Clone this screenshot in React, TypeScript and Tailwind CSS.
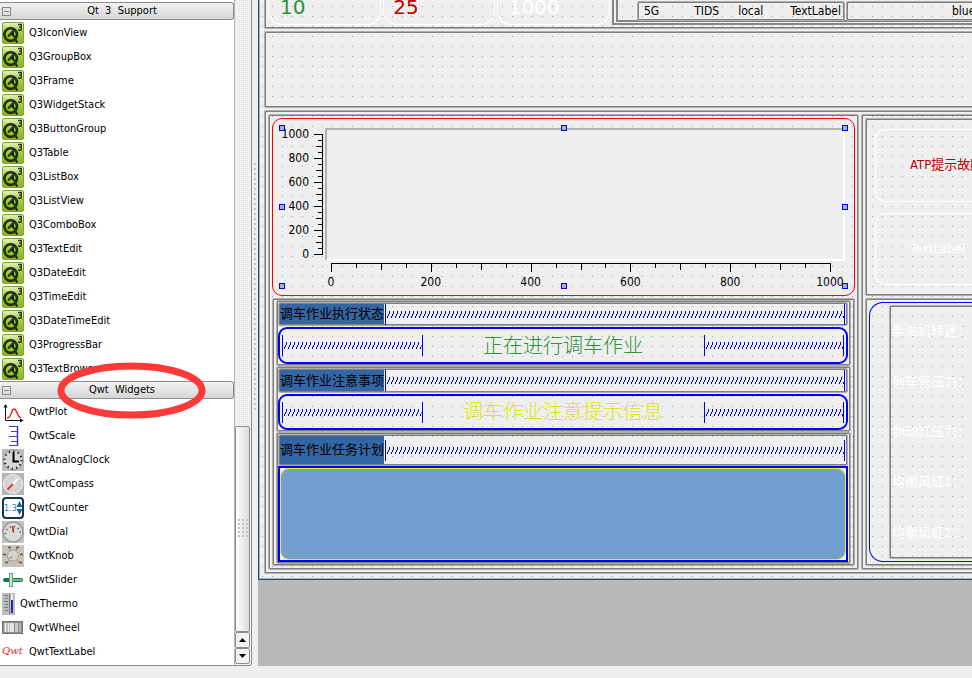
import { ReactNode, useId } from "react";

const FRAME = "rounded-[2px] border border-[#adadad] shadow-[inset_0_0_0_1px_#808080]";
const OPEN_FRAME = "rounded-l-[2px] border border-r-0 border-[#adadad] shadow-[inset_1px_1px_0_#808080,inset_0_-1px_0_#808080]";

function Q3Icon() {
  return (
    <svg width="22" height="22" viewBox="0 0 22 22">
      <defs>
        <linearGradient id="q3" x1="0" y1="0" x2="0" y2="1">
          <stop offset="0" stopColor="#e6f2cc" />
          <stop offset="0.4" stopColor="#a6d13f" />
          <stop offset="1" stopColor="#86b81e" />
        </linearGradient>
      </defs>
      <rect x="0.5" y="0.5" width="21" height="21" rx="1.5" fill="url(#q3)" stroke="#78a824" />
      <circle cx="8.7" cy="12.6" r="6.300" fill="none" stroke="#222b1c" strokeWidth="2.600" />
      <path d="M6 14.500 11 9.500v3.500M9 11.500l4.500 4M12.500 16.500l3 4" stroke="#222b1c" strokeWidth="2.200" fill="none" />
      <path d="M16 2.500h3.200v5.500H16M16.800 5.200h2.400" stroke="#26301c" strokeWidth="1.300" fill="none" />
    </svg>
  );
}

function PlotIcon() {
  return (
    <svg width="22" height="22" viewBox="0 0 22 22">
      <path d="M3.500 5v14.500H20" stroke="#111" fill="none" />
      <path d="M1.500 6.500 3.500 3l2 3.500zM18 17.500l3.500 2-3.500 2z" fill="#111" />
      <path d="M5 17c5 0 4-9 7-9s3 8 7 9" stroke="#d22" strokeWidth="1.400" fill="none" />
    </svg>
  );
}

function ScaleIcon() {
  return (
    <svg width="22" height="22" viewBox="0 0 22 22">
      <path d="M15.500 1v20" stroke="#3a36c8" strokeWidth="1.500" fill="none" />
      <path d="M7 1.500h9M9 6.500h7M7 11.500h9M9 16.500h7M7 20.500h9" stroke="#4844c4" fill="none" />
    </svg>
  );
}

function ClockIcon() {
  return (
    <svg width="22" height="22" viewBox="0 0 22 22">
      <rect width="22" height="22" fill="#bdbdbd" />
      <circle cx="11" cy="11" r="10" fill="#d8d8d8" stroke="#999" />
      <circle cx="11" cy="11" r="8.500" fill="none" stroke="#111" strokeWidth="2" strokeDasharray="1.300 3.150" />
      <path d="M11.500 3v9.500H17" stroke="#000" strokeWidth="2" fill="none" />
    </svg>
  );
}

function CompassIcon() {
  return (
    <svg width="22" height="22" viewBox="0 0 22 22">
      <rect width="22" height="22" fill="#b5b5b5" />
      <circle cx="11" cy="11" r="9.500" fill="#d6d6d6" stroke="#eee" />
      <circle cx="11" cy="11" r="7" fill="none" stroke="#aaa" strokeDasharray="1 3" />
      <path d="M5.500 16.500 11 11" stroke="#e33" strokeWidth="2" />
      <path d="M11 11l5-5.500" stroke="#fff" strokeWidth="2" />
    </svg>
  );
}

function CounterIcon() {
  return (
    <svg width="22" height="22" viewBox="0 0 22 22">
      <rect x="1" y="1" width="20" height="20" rx="3" fill="#fff" stroke="#12384f" strokeWidth="2" />
      <text x="2" y="14" fontSize="8" fill="#1f78c0" fontFamily="DejaVu Sans">1.3</text>
      <path d="M14.500 10l3-6 3 6zM14.500 12l3 6 3-6z" fill="#14639c" />
    </svg>
  );
}

function DialIcon() {
  return (
    <svg width="22" height="22" viewBox="0 0 22 22">
      <rect width="22" height="22" fill="#c2c2c2" />
      <circle cx="11" cy="11" r="10" fill="#dadada" stroke="#999" strokeWidth="1.500" />
      <path d="M3.500 13a7.500 7.500 0 1 1 15 0" fill="none" stroke="#333" strokeWidth="1.500" strokeDasharray="1 3.200" />
      <path d="M10.500 5l1 6.500" stroke="#c11" strokeWidth="1.500" />
    </svg>
  );
}

function KnobIcon() {
  return (
    <svg width="22" height="22" viewBox="0 0 22 22">
      <rect width="22" height="22" fill="#c9c2b5" />
      <path d="M1 9.500h3M18 9.500h3M6 2.500h3M14 2.500h3M3 17.500h3M17 17.500h3" stroke="#555" strokeWidth="1.500" />
      <path d="M7.500 3.500l1.500 3M15 3.500l-1.500 3M5 17l2.500-2M17 17l-2.500-2" stroke="#8a857a" />
      <circle cx="11" cy="10.500" r="5.500" fill="#d9d4ca" stroke="#8a857a" strokeDasharray="2 1" />
      <path d="M8 13.500l2-2" stroke="#555" />
    </svg>
  );
}

function SliderIcon() {
  return (
    <svg width="22" height="22" viewBox="0 0 22 22">
      <rect x="1" y="9" width="20" height="4" rx="2" fill="#17764a" />
      <rect x="11" y="10" width="9" height="2" fill="#6fbb95" />
      <rect x="7.500" y="4.500" width="3" height="13" fill="#c5e3c8" stroke="#6da57a" />
    </svg>
  );
}

function ThermoIcon() {
  return (
    <svg width="13" height="22" viewBox="0 0 13 22">
      <rect width="13" height="22" fill="#bcbcbc" />
      <path d="M2 2.500h4M3 5.500h3M2 8.500h4M3 11.500h3M2 14.500h4M3 17.500h3M7.500 1v20" stroke="#777" />
      <rect x="9" y="1" width="2" height="6" fill="#e8e8e8" />
      <rect x="9" y="7" width="2" height="13" fill="#2a2aa5" />
    </svg>
  );
}

function WheelIcon() {
  return (
    <svg width="22" height="22" viewBox="0 0 22 22">
      <rect x="0.500" y="4.500" width="20" height="12" fill="#8c8c8c" stroke="#777" />
      <path d="M3.500 6v9M6.500 6v9" stroke="#eee" strokeWidth="2" />
      <rect x="8" y="6" width="4" height="9" fill="#e6e6e6" />
      <rect x="13" y="6" width="3" height="9" fill="#ccc" />
      <path d="M18 6v9" stroke="#ddd" />
    </svg>
  );
}

function TextLabelIcon() {
  return (
    <svg width="22" height="22" viewBox="0 0 22 22">
      <text x="0" y="13" fontSize="10" fontStyle="italic" fill="#f01818" fontFamily="DejaVu Serif">
        Qwt
      </text>
    </svg>
  );
}

const q3Items = [
  "Q3IconView",
  "Q3GroupBox",
  "Q3Frame",
  "Q3WidgetStack",
  "Q3ButtonGroup",
  "Q3Table",
  "Q3ListBox",
  "Q3ListView",
  "Q3ComboBox",
  "Q3TextEdit",
  "Q3DateEdit",
  "Q3TimeEdit",
  "Q3DateTimeEdit",
  "Q3ProgressBar",
  "Q3TextBrowser",
];

const qwtItems = [
  { name: "QwtPlot", icon: <PlotIcon /> },
  { name: "QwtScale", icon: <ScaleIcon /> },
  { name: "QwtAnalogClock", icon: <ClockIcon /> },
  { name: "QwtCompass", icon: <CompassIcon /> },
  { name: "QwtCounter", icon: <CounterIcon /> },
  { name: "QwtDial", icon: <DialIcon /> },
  { name: "QwtKnob", icon: <KnobIcon /> },
  { name: "QwtSlider", icon: <SliderIcon /> },
  { name: "QwtThermo", icon: <ThermoIcon /> },
  { name: "QwtWheel", icon: <WheelIcon /> },
  { name: "QwtTextLabel", icon: <TextLabelIcon /> },
];

const gauges = ["柴油机转速：", "列车管压力：", "制动缸压力：", "均衡风缸1：", "均衡风缸2："];

function GroupHeader({ title }: { title: string }) {
  return (
    <button
      type="button"
      className="flex h-[18px] w-full shrink-0 items-center rounded-r-[3px] border border-l-0 border-[#8c8c8c] bg-linear-to-b from-[#f2f2f2] to-[#d6d6d6] pl-[2px]"
    >
      <svg width="9" height="9" viewBox="0 0 9 9" shapeRendering="crispEdges">
        <path d="M0.500 0.500h8v8h-8zM2 4.500h5" fill="none" stroke="#8a8a8a" />
      </svg>
      <span className="flex-1 whitespace-pre text-center">{title}</span>
    </button>
  );
}

function WidgetRow({ name, icon }: { name: string; icon: ReactNode }) {
  return (
    <li className="flex h-6 items-center gap-[5px] pl-[2px]">
      {icon}
      <span>{name}</span>
    </li>
  );
}

function ScrollBar() {
  return (
    <div className="flex w-4 shrink-0 flex-col border-l border-[#b5b5b5] bg-[#f4f4f4] pb-px">
      <div className="min-h-0 flex-1 basis-[426px] bg-[conic-gradient(at_1px_1px,transparent_75%,#dedede_0)] bg-size-[2px_2px]" />
      <div className="flex basis-[206px] flex-col items-center justify-center rounded-[2px] border border-[#8c8c8c] bg-linear-to-r from-white to-[#dcdcdc]">
        <div className="h-5 w-[10px] bg-[conic-gradient(at_2px_2px,transparent_75%,#c4c4c4_0)] bg-size-[4px_4px]" />
      </div>
      <button type="button" aria-label="Scroll up" className="flex h-4 items-center justify-center rounded-[2px] border border-[#8c8c8c] bg-[#f2f2f2]">
        <svg width="7" height="4"><path d="M0 4 3.500 0 7 4z" /></svg>
      </button>
      <button type="button" aria-label="Scroll down" className="flex h-4 items-center justify-center rounded-[2px] border border-[#8c8c8c] bg-[#f2f2f2]">
        <svg width="7" height="4"><path d="M0 0 3.500 4 7 0z" /></svg>
      </button>
    </div>
  );
}

function WidgetBox() {
  return (
    <aside className="relative flex w-[252px] shrink-0 overflow-hidden rounded-br-[3px] border-r border-b border-[#8c8c8c] bg-white">
      <div className="flex min-w-0 flex-1 flex-col pt-[2px]">
        <GroupHeader title="Qt  3  Support" />
        <ul className="pt-px">
          {q3Items.map((name) => (
            <WidgetRow key={name} name={name} icon={<Q3Icon />} />
          ))}
        </ul>
        <GroupHeader title="Qwt  Widgets" />
        <ul className="pt-px">
          {qwtItems.map((item) => (
            <WidgetRow key={item.name} name={item.name} icon={item.icon} />
          ))}
        </ul>
      </div>
      <ScrollBar />
      <div className="w-px shrink-0 bg-[#f4f4f4]" />
      <svg className="pointer-events-none absolute left-[56px] top-[360px]" width="152" height="60">
        <ellipse cx="75.500" cy="30.500" rx="70.500" ry="24.500" fill="none" stroke="#fc3a3a" strokeWidth="7" />
      </svg>
    </aside>
  );
}

/* Horizontal spacer: two end bars joined by slanted strokes */
function Spring() {
  const id = useId();
  return (
    <div className="flex h-[21px] min-w-0 flex-1 items-center border-x border-[#0000e6]">
      <svg className="h-[7px] w-full">
        <defs>
          <pattern id={id} width="4" height="7" patternUnits="userSpaceOnUse">
            <path d="M1 5h1v2H1zM2 3h1v2H2zM3 0h1v3H3z" fill="#0000e6" shapeRendering="crispEdges" />
          </pattern>
        </defs>
        <rect width="100%" height="7" fill={`url(#${id})`} />
      </svg>
    </div>
  );
}

function Handle({ place }: { place: string }) {
  return <span className={`absolute size-[6px] border border-[#0000ff] bg-[#b0b0b0] ${place}`} />;
}

const steps = Array.from({ length: 21 }, (_, i) => i);
const tickLength = (i: number) => (i % 4 === 0 ? 9 : i % 2 === 0 ? 7 : 5);

function Plot() {
  return (
    <div className="relative pl-px pt-[3px]">
      <div className="flex h-[133px]">
        <div className="flex h-[144px] w-[29px] -translate-y-[6px] flex-col justify-between text-right text-[12px] leading-6">
          {[1000, 800, 600, 400, 200, 0].map((v) => (
            <span key={v} className="whitespace-nowrap">{v}</span>
          ))}
        </div>
        <svg className="ml-[5px] mr-[2px] mt-[6px] h-[121px] w-[9px]" shapeRendering="crispEdges">
          <rect x="8" y="0" width="1" height="121" />
          {steps.map((i) => (
            <rect key={i} x={9 - tickLength(i)} y={i * 6} width={tickLength(i)} height="1" />
          ))}
        </svg>
        <div className="flex-1 border-2 border-b-white border-l-[#b4b4b4] border-r-white border-t-[#b4b4b4] bg-[#efefef]" />
        <div className="w-[3px]" />
      </div>
      <svg className="ml-[51px] mt-[2px] block h-[9px] w-[calc(100%_-_69px)] overflow-visible" shapeRendering="crispEdges">
        <rect width="100%" height="1" />
        {steps.map((i) => (
          <rect key={i} x={`${i * 5}%`} y="0" width="1" height={tickLength(i)} />
        ))}
      </svg>
      <div className="ml-[31px] -mr-[2px] flex h-[17px] justify-between text-center text-[12px] leading-5">
        {[0, 200, 400, 600, 800, 1000].map((v) => (
          <span key={v} className="w-10">{v}</span>
        ))}
      </div>
      <Handle place="left-0 top-0" />
      <Handle place="left-1/2 top-0 -translate-x-1/2" />
      <Handle place="right-0 top-0" />
      <Handle place="left-0 top-1/2 -translate-y-1/2" />
      <Handle place="right-0 top-1/2 -translate-y-1/2" />
      <Handle place="left-0 bottom-0" />
      <Handle place="left-1/2 bottom-0 -translate-x-1/2" />
      <Handle place="right-0 bottom-0" />
    </div>
  );
}

function SectionTitle({ title, height }: { title: string; height: string }) {
  return (
    <div className={`flex items-center py-px pl-px pr-[2px] ${FRAME} ${height}`}>
      <h2 className="mr-px flex h-full shrink-0 items-center bg-[#3465a4] text-[13px] leading-4">{title}</h2>
      <Spring />
    </div>
  );
}

function Message({ text, color, height }: { text: string; color: string; height: string }) {
  return (
    <div className={`mt-px flex items-center rounded-[9px] border-2 border-[#0000ff] px-[2px] ${height}`}>
      <Spring />
      <p className={`w-1/2 whitespace-nowrap text-center text-[20px] leading-7 font-light ${color}`}>{text}</p>
      <Spring />
    </div>
  );
}

function Tasks() {
  return (
    <div className={`mt-[2px] px-[3px] py-px ${FRAME}`}>
      <div className={`py-px pl-px pr-[2px] ${FRAME}`}>
        <SectionTitle title="调车作业执行状态" height="h-6" />
        <Message text="正在进行调车作业" color="text-[#2f9138]" height="h-[37px]" />
      </div>
      <div className={`py-px pl-px pr-[2px] ${FRAME}`}>
        <SectionTitle title="调车作业注意事项" height="h-[25px]" />
        <Message text="调车作业注意提示信息" color="text-[#e2e218]" height="h-9" />
      </div>
      <div className={`py-px pl-px pr-[2px] ${FRAME}`}>
        <SectionTitle title="调车作业任务计划" height="h-8" />
        <div className="h-24 border-2 border-[#0000ff] bg-[#efefef]">
          <div className="h-full rounded-[9px] border border-[#f4f410] bg-[#729fcf]" />
        </div>
      </div>
    </div>
  );
}

function StatusRow() {
  return (
    <div className="flex h-[29px] items-start rounded-bl-[2px] border-b border-l border-[#adadad] pl-[3px] shadow-[inset_1px_-1px_0_#808080]">
      <div className="flex h-[25px] min-w-0 flex-1 gap-[2px] font-['DejaVu_Sans',sans-serif] text-[20px] leading-[14px]">
        <p className="flex-1 rounded-b-[14px] border border-t-0 border-white pl-[11px] text-[#2f9138]">10</p>
        <p className="flex-1 rounded-b-[14px] border border-t-0 border-white pl-[9px] text-[#c00000]">25</p>
        <p className="flex-1 rounded-b-[14px] border border-t-0 border-white pl-[11px] text-white">1000</p>
      </div>
      <div className="ml-[2px] flex h-[25px] w-[360px] shrink-0 border-b-2 border-l-2 border-[#868686] pl-[2px] text-[12px]">
        <div className="flex h-[22px] flex-1 border-b-2 border-l-2 border-[#868686] pl-[19px]">
          <div className={`mt-px flex h-5 w-[208px] items-center justify-between pl-[6px] pr-[3px] ${FRAME}`}>
            <span>5G</span>
            <span className="ml-4">TIDS</span>
            <span>local</span>
            <span className="ml-2">TextLabel</span>
          </div>
          <div className={`mt-px ml-px flex h-5 flex-1 items-center overflow-hidden whitespace-nowrap pl-[105px] ${OPEN_FRAME}`}>
            <span>blue</span>
          </div>
        </div>
      </div>
    </div>
  );
}

function SidePanels() {
  return (
    <div className={`flex w-[111px] shrink-0 flex-col overflow-hidden py-[3px] pl-[3px] ${OPEN_FRAME}`}>
      <div className={`flex h-[178px] flex-col gap-[11px] overflow-hidden py-[10px] pl-[9px] ${OPEN_FRAME}`}>
        <p className="flex flex-1 items-center whitespace-nowrap rounded-l-[10px] border border-r-0 border-white pl-[34px] text-[13px] text-[#c00000]">
          ATP提示故障
        </p>
        <p className="flex flex-1 items-center whitespace-nowrap rounded-l-[10px] border border-r-0 border-white pl-[34px] text-[13px] text-white">
          TextLabel
        </p>
      </div>
      <div className={`mt-[2px] flex-1 py-[3px] pl-[3px] ${OPEN_FRAME}`}>
        <div className="h-full rounded-l-[14px] border border-r-0 border-[#0000ff] py-[2px] pl-[19px]">
          <ul className={`flex h-full flex-col justify-around whitespace-nowrap pl-[2px] text-[13px] text-white ${OPEN_FRAME}`}>
            {gauges.map((label) => (
              <li key={label}>{label}</li>
            ))}
          </ul>
        </div>
      </div>
    </div>
  );
}

export default function App() {
  return (
    <div className="flex h-screen min-h-[678px] overflow-hidden bg-[#efefef] pb-3 font-['DejaVu_Sans_Condensed','DejaVu_Sans','Noto_Sans_CJK_SC',sans-serif] text-[11px] leading-4 text-black">
      <WidgetBox />
      <div className="flex w-[6px] shrink-0 flex-col items-center justify-center pb-[90px]">
        <div className="h-[250px] w-[2px] bg-[linear-gradient(#c4c4c4_2px,transparent_2px)] bg-size-[2px_5px]" />
      </div>
      <main className="min-w-0 flex-1 overflow-hidden bg-[#b8b8b8]">
        <div className="border-b border-l border-[#2f4a60]">
          <div className="border-b border-l border-[#9db5c8] bg-[#efefef] bg-[conic-gradient(at_1px_1px,transparent_75%,#a6a6a6_0)] bg-size-[10px_10px] bg-position-[2px_6px] pb-1 pl-1">
            <StatusRow />
            <div className={`mt-[2px] h-[77px] ${OPEN_FRAME}`} />
            <div className={`mt-[2px] flex gap-[2px] py-[3px] pl-[3px] ${OPEN_FRAME}`}>
              <div className={`min-w-0 flex-1 p-[3px] ${FRAME}`}>
                <div className="h-[178px] rounded-[10px] border border-[#ff0000] p-[6px]">
                  <Plot />
                </div>
                <Tasks />
              </div>
              <SidePanels />
            </div>
          </div>
        </div>
      </main>
    </div>
  );
}
